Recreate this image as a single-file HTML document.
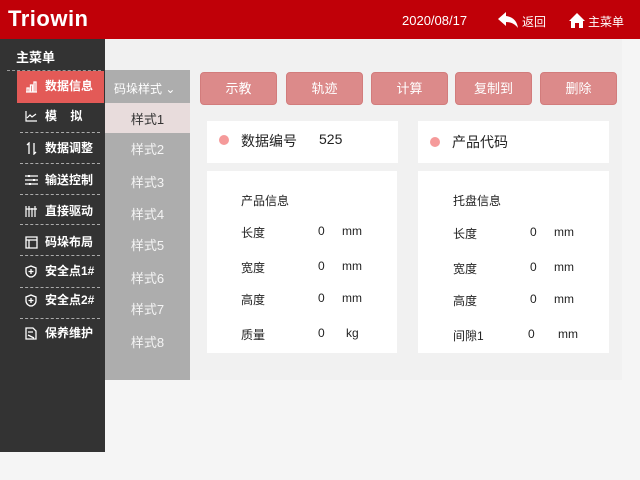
<!DOCTYPE html>
<html><head><meta charset="utf-8"><style>
*{margin:0;padding:0;box-sizing:border-box}
body{width:640px;height:480px;overflow:hidden;background:#f5f5f5;font-family:"Liberation Sans","Noto Sans CJK SC",sans-serif;position:relative}
.a{position:absolute}
#hd{left:0;top:0;width:640px;height:39px;background:#c00008;color:#fff}
#side{left:0;top:39px;width:105px;height:413px;background:#333}
#grey{left:105px;top:39px;width:517px;height:341px;background:#f1f1f1}
.it{position:absolute;left:17px;width:87px;height:31px;color:#fff;font-size:12px;line-height:31px;padding-left:28px;font-weight:bold}
.sep{position:absolute;left:20px;width:80px;border-top:1px dashed #aaa}
.it svg{position:absolute;left:8px;top:9px}
#col{left:105px;top:70px;width:85px;height:310px;background:#adadad}
.st{position:absolute;left:105px;width:85px;text-align:center;color:#f4f4f4;font-size:13px}
.btn{position:absolute;top:72px;width:77px;height:33px;background:#dc8a8a;border:1px solid #d27c7c;border-radius:4px;color:#fff;font-size:13px;text-align:center;line-height:31px}
.card{position:absolute;background:#fff}
.dot{position:absolute;width:10px;height:10px;border-radius:5px;background:#f59a9a}
.t{position:absolute;font-size:12px;color:#222}
</style></head><body>
<div id="hd" class="a">
<div class="a" style="left:8px;top:6px;font-size:22px;font-weight:bold;letter-spacing:0.5px">Triowin</div>
<div class="a" style="left:402px;top:13px;font-size:13px">2020/08/17</div>
<svg class="a" style="left:497px;top:11px" width="22" height="18" viewBox="0 0 22 18"><path d="M9 1 L1 8 L9 15 L9 11 C14 11 18 13 21 17 C20 10 16 6 9 5 Z" fill="#fff"/></svg>
<div class="a" style="left:522px;top:13px;font-size:12px">返回</div>
<svg class="a" style="left:568px;top:12px" width="18" height="17" viewBox="0 0 18 17"><path d="M9 1 L1 9 L3 9 L3 16 L7 16 L7 11 L11 11 L11 16 L15 16 L15 9 L17 9 Z" fill="#fff"/></svg>
<div class="a" style="left:588px;top:13px;font-size:12px">主菜单</div>
</div>
<div id="side" class="a"></div>
<div class="a" style="left:16px;top:47px;color:#fff;font-size:13px;font-weight:bold">主菜单</div>
<div class="a" style="left:7px;top:70px;width:94px;border-top:1px dashed #999"></div>
<div class="it" style="top:71px;height:32px;background:#e35a57"><svg width="13" height="13" viewBox="0 0 13 13" fill="none" stroke="#fff" stroke-width="1.3"><path d="M1 12H12M2 12V8H4V12M5.5 12V5H7.5V12M9 12V2H11V12"/></svg>数据信息</div>
<div class="it" style="top:101px"><svg width="13" height="12" viewBox="0 0 13 12" fill="none" stroke="#fff" stroke-width="1.2"><path d="M1 1V11H12M2 8L5 5L7 7L11 4"/></svg>模&nbsp;&nbsp;&nbsp;&nbsp;拟</div>
<div class="sep" style="top:132px"></div>
<div class="it" style="top:133px"><svg width="13" height="13" viewBox="0 0 13 13" fill="none" stroke="#fff" stroke-width="1.3"><path d="M2 3L4 1V12M9 1V12L11 10"/></svg>数据调整</div>
<div class="sep" style="top:163px"></div>
<div class="it" style="top:165px"><svg width="13" height="12" viewBox="0 0 13 12" fill="none" stroke="#fff" stroke-width="1.2"><path d="M0 2H13M0 6H13M0 10H13"/><path d="M4 1V3M9 5V7M5 9V11" stroke-width="2"/></svg>输送控制</div>
<div class="sep" style="top:194px"></div>
<div class="it" style="top:196px"><svg width="13" height="13" viewBox="0 0 13 13" fill="none" stroke="#fff" stroke-width="1.2"><path d="M1 1V12M4 1V12M7 3V12M10 1V12M1 4H12"/></svg>直接驱动</div>
<div class="sep" style="top:224px"></div>
<div class="it" style="top:227px"><svg width="13" height="13" viewBox="0 0 13 13" fill="none" stroke="#fff" stroke-width="1.3"><path d="M1 1H12V12H1ZM1 4H12M4 4V12"/></svg>码垛布局</div>
<div class="sep" style="top:255px"></div>
<div class="it" style="top:256px"><svg width="12" height="13" viewBox="0 0 12 13" fill="none" stroke="#fff" stroke-width="1.3"><path d="M6 1L11 3V7C11 10 8 12 6 12C4 12 1 10 1 7V3Z M6 4V9M3.5 6.5H8.5"/></svg>安全点1#</div>
<div class="sep" style="top:287px"></div>
<div class="it" style="top:285px"><svg width="12" height="13" viewBox="0 0 12 13" fill="none" stroke="#fff" stroke-width="1.3"><path d="M6 1L11 3V7C11 10 8 12 6 12C4 12 1 10 1 7V3Z M6 4V9M3.5 6.5H8.5"/></svg>安全点2#</div>
<div class="sep" style="top:318px"></div>
<div class="it" style="top:318px"><svg width="12" height="13" viewBox="0 0 12 13" fill="none" stroke="#fff" stroke-width="1.3"><path d="M1 1H8L11 4V12H1ZM3 5H8M3 8L9 11"/></svg>保养维护</div>
<div id="grey" class="a"></div>
<div id="col" class="a"></div>
<div class="a" style="left:105px;top:70px;width:85px;height:33px;color:#fff;font-size:12px;line-height:38px;padding-left:9px">码垛样式 ⌄</div>
<div class="a" style="left:105px;top:103px;width:85px;height:30px;background:#e8dcdc"></div>
<div class="st" style="top:109px;color:#333">样式1</div>
<div class="st" style="top:139px">样式2</div>
<div class="st" style="top:172px">样式3</div>
<div class="st" style="top:204px">样式4</div>
<div class="st" style="top:235px">样式5</div>
<div class="st" style="top:268px">样式6</div>
<div class="st" style="top:299px">样式7</div>
<div class="st" style="top:332px">样式8</div>
<div class="btn" style="left:200px">示教</div>
<div class="btn" style="left:286px">轨迹</div>
<div class="btn" style="left:371px">计算</div>
<div class="btn" style="left:455px">复制到</div>
<div class="btn" style="left:540px">删除</div>
<div class="card" style="left:207px;top:121px;width:191px;height:42px"></div>
<div class="dot" style="left:219px;top:135px"></div>
<div class="t" style="left:241px;top:131px;font-size:14px">数据编号</div>
<div class="t" style="left:319px;top:131px;font-size:14px">525</div>
<div class="card" style="left:418px;top:121px;width:191px;height:42px"></div>
<div class="dot" style="left:430px;top:137px"></div>
<div class="t" style="left:452px;top:132px;font-size:14px">产品代码</div>
<div class="card" style="left:207px;top:171px;width:190px;height:182px"></div>
<div class="card" style="left:418px;top:171px;width:191px;height:182px"></div>
<div class="t" style="left:241px;top:192px">产品信息</div>
<div class="t" style="left:241px;top:224px">长度</div><div class="t" style="left:318px;top:224px">0</div><div class="t" style="left:342px;top:224px">mm</div>
<div class="t" style="left:241px;top:259px">宽度</div><div class="t" style="left:318px;top:259px">0</div><div class="t" style="left:342px;top:259px">mm</div>
<div class="t" style="left:241px;top:291px">高度</div><div class="t" style="left:318px;top:291px">0</div><div class="t" style="left:342px;top:291px">mm</div>
<div class="t" style="left:241px;top:326px">质量</div><div class="t" style="left:318px;top:326px">0</div><div class="t" style="left:346px;top:326px">kg</div>
<div class="t" style="left:453px;top:192px">托盘信息</div>
<div class="t" style="left:453px;top:225px">长度</div><div class="t" style="left:530px;top:225px">0</div><div class="t" style="left:554px;top:225px">mm</div>
<div class="t" style="left:453px;top:260px">宽度</div><div class="t" style="left:530px;top:260px">0</div><div class="t" style="left:554px;top:260px">mm</div>
<div class="t" style="left:453px;top:292px">高度</div><div class="t" style="left:530px;top:292px">0</div><div class="t" style="left:554px;top:292px">mm</div>
<div class="t" style="left:453px;top:327px">间隙1</div><div class="t" style="left:528px;top:327px">0</div><div class="t" style="left:558px;top:327px">mm</div>
</body></html>
